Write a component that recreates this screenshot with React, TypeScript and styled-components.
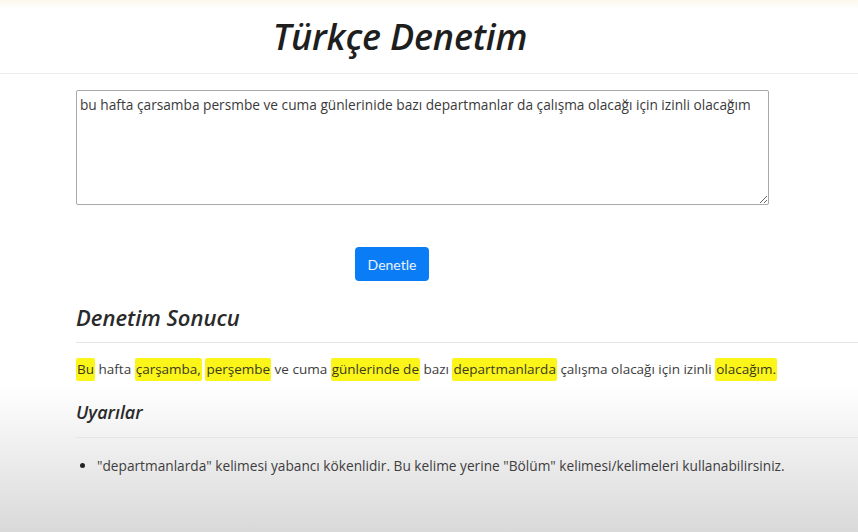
import React, { useState } from 'react';
import styled, { createGlobalStyle } from 'styled-components';

const GlobalStyle = createGlobalStyle`
  html, body {
    margin: 0;
    padding: 0;
  }

  body {
    min-height: 532px;
    font-family: "Open Sans", "Noto Sans", sans-serif;
    color: #3a3a3a;
    background: linear-gradient(
      to bottom,
      #fbf8ec 0px,
      #ffffff 10px,
      #ffffff 385px,
      #f1f1f1 440px,
      #d9d9d9 532px
    );
    overflow: hidden;
  }
`;

const Header = styled.header`
  height: 73px;
  border-bottom: 1px solid #ececec;
  display: flex;
  align-items: center;
  justify-content: center;
  padding-right: 58px;
`;

const Title = styled.h1`
  margin: 0;
  font-size: 36px;
  font-style: italic;
  font-weight: 600;
  color: #1e1e1e;
  letter-spacing: -0.2px;
`;

const Main = styled.main`
  padding-left: 76px;
`;

const Editor = styled.textarea`
  display: block;
  box-sizing: border-box;
  width: 693px;
  height: 115px;
  margin-top: 16px;
  padding: 4px 3px;
  border: 1px solid #a9a9a9;
  border-radius: 2px;
  font-family: "Open Sans", "Noto Sans", sans-serif;
  font-size: 13.7px;
  color: #3a3a3a;
  resize: both;
`;

const ButtonRow = styled.div`
  display: flex;
  padding-left: 279px;
  margin-top: 42px;
`;

const Button = styled.button`
  width: 74px;
  height: 34px;
  border: none;
  border-radius: 4px;
  background: #0a7cf5;
  color: #eaf3ff;
  font-family: Lato, "Open Sans", sans-serif;
  font-size: 14px;
  cursor: pointer;

  &:hover {
    background: #0069d9;
  }
`;

const SectionTitle = styled.h2<{ $size: number; $gap: number; $pad: number }>`
  margin: ${({ $gap }) => $gap}px 0 0;
  padding-bottom: ${({ $pad }) => $pad}px;
  border-bottom: 1px solid #e6e6e6;
  font-size: ${({ $size }) => $size}px;
  font-style: italic;
  font-weight: 600;
  color: #2a2a2a;
  line-height: 1.2;
`;

const Result = styled.p`
  margin: 15px 0 0;
  font-size: 13.5px;
  line-height: 22px;
  color: #3d3d3d;
`;

const Mark = styled.mark`
  background: #fbf51a;
  color: #3a3a20;
  padding: 2px 1px 3px;
  border-radius: 2px;
`;

const Warnings = styled.ul`
  margin: 17px 0 0;
  padding-left: 21px;
  font-size: 13.7px;
  line-height: 22px;
  color: #3d3d3d;

  li::marker {
    color: #222;
  }
`;

const Item = styled.li`
  padding-left: 0;
`;

const parts: { text: string; mark: boolean }[] = [
  { text: 'Bu', mark: true },
  { text: ' hafta ', mark: false },
  { text: 'çarşamba,', mark: true },
  { text: ' ', mark: false },
  { text: 'perşembe', mark: true },
  { text: ' ve cuma ', mark: false },
  { text: 'günlerinde de', mark: true },
  { text: ' bazı ', mark: false },
  { text: 'departmanlarda', mark: true },
  { text: ' çalışma olacağı için izinli ', mark: false },
  { text: 'olacağım.', mark: true },
];

const App: React.FC = () => {
  const [text, setText] = useState(
    'bu hafta çarsamba persmbe ve cuma günlerinide bazı departmanlar da çalışma olacağı için izinli olacağım'
  );

  return (
    <>
      <GlobalStyle />
      <Header>
        <Title>Türkçe Denetim</Title>
      </Header>
      <Main>
        <Editor value={text} onChange={(e) => setText(e.target.value)} />
        <ButtonRow>
          <Button>Denetle</Button>
        </ButtonRow>
        <SectionTitle $size={22} $gap={23} $pad={12}>Denetim Sonucu</SectionTitle>
        <Result>
          {parts.map((part, i) =>
            part.mark ? <Mark key={i}>{part.text}</Mark> : <span key={i}>{part.text}</span>
          )}
        </Result>
        <SectionTitle as="h3" $size={18} $gap={22} $pad={13}>Uyarılar</SectionTitle>
        <Warnings>
          <Item>
            "departmanlarda" kelimesi yabancı kökenlidir. Bu kelime yerine "Bölüm" kelimesi/kelimeleri kullanabilirsiniz.
          </Item>
        </Warnings>
      </Main>
    </>
  );
};

export default App;
